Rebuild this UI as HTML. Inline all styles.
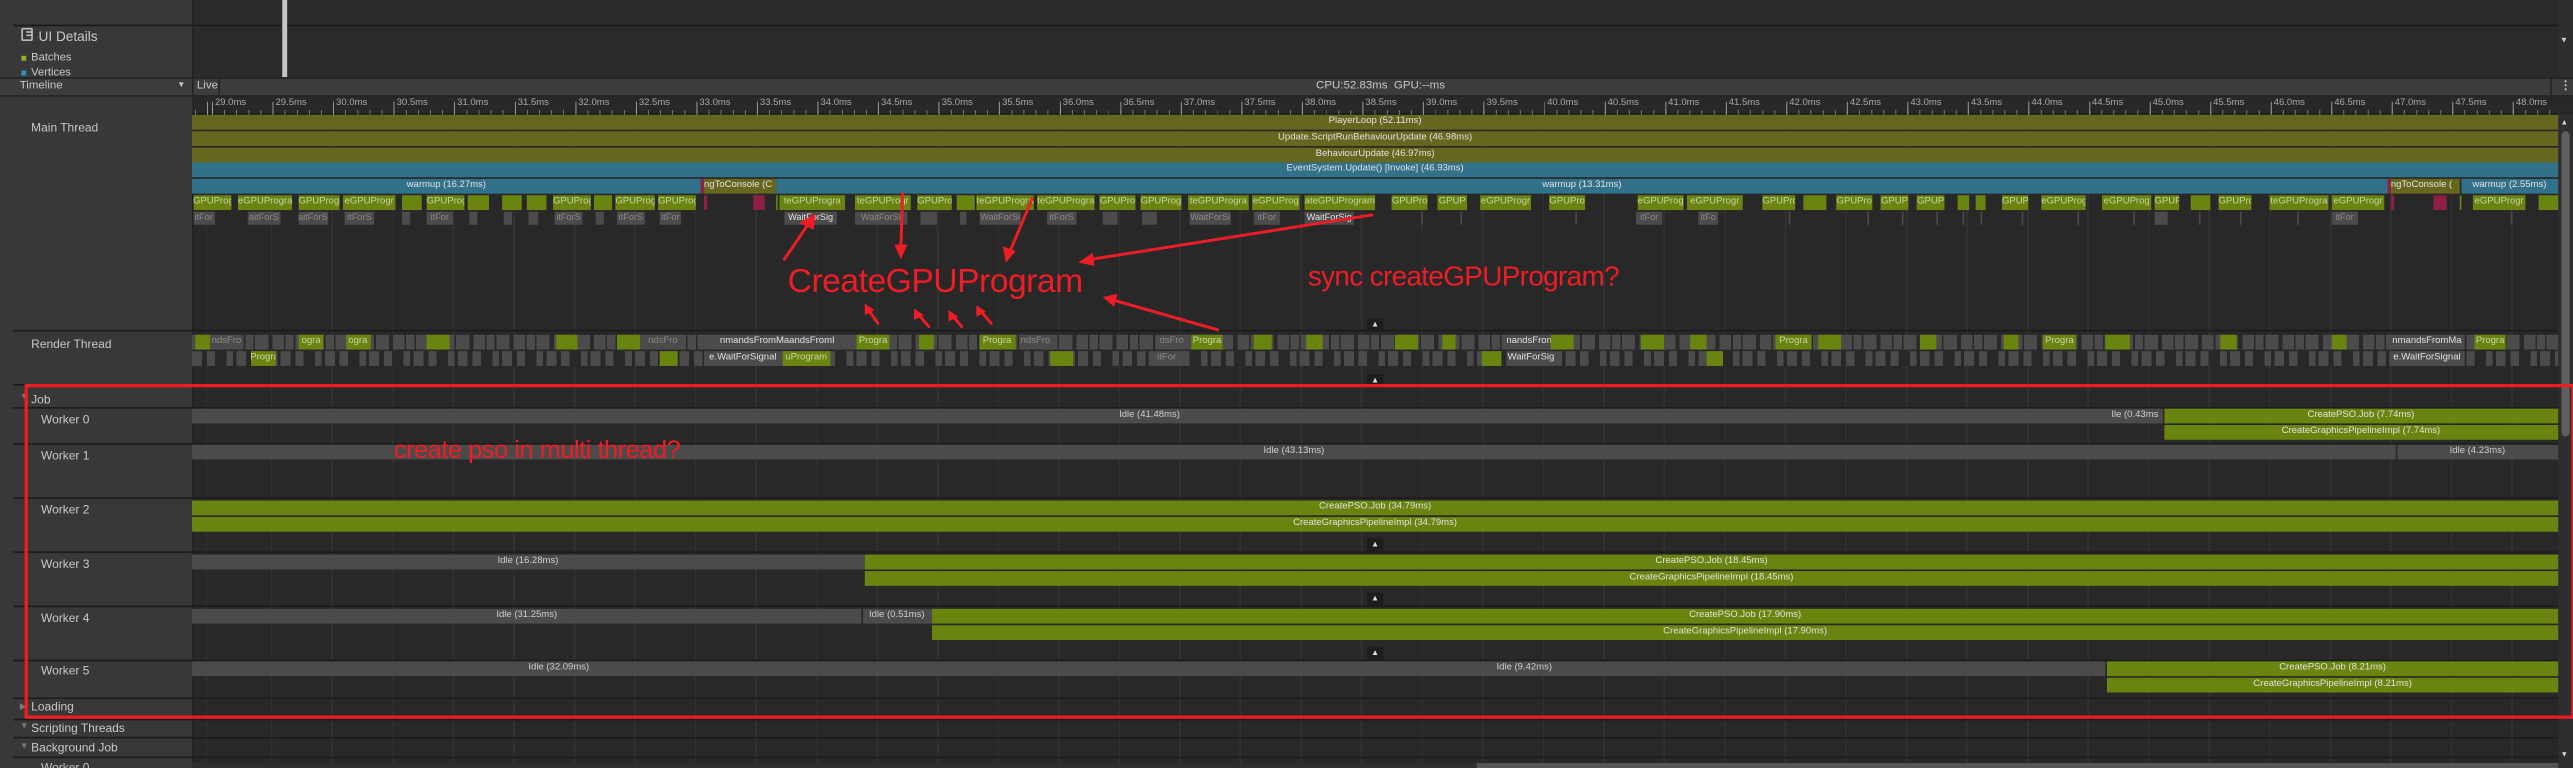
<!DOCTYPE html>
<html><head><meta charset="utf-8"><style>
body{margin:0;width:2573px;height:768px;overflow:hidden;background:#282828}
#w{position:absolute;left:0;top:0;width:1568px;height:468px;transform:scale(1.64094,1.64103);transform-origin:0 0;font-family:"Liberation Sans",sans-serif;overflow:hidden;background:#282828}
#w div{position:absolute;box-sizing:border-box}
.b{height:9px;font-size:5.8px;line-height:9px;text-align:center;color:#e2e2e2;overflow:hidden;white-space:nowrap}
.o{background:#66671f}.bl{background:#32718a}.g{background:#6a8410;color:#c9d3a8}.gy{background:#4b4b4b;color:#cfcfcf}.pk{background:#8f1f45}
.t{height:8px;top:129px;background:#4b4b4b;font-size:5.6px;line-height:8px;color:#8a8a8a;overflow:hidden;white-space:nowrap;text-align:center}
.th{width:1px;height:8px;top:129px;background:#4b4b4b}
.m{top:119px}
.r1{top:204px}.r2{top:214px}
.lab{color:#c8c8c8;font-size:7.3px;white-space:nowrap}
.rl{top:60px;font-size:5.8px;color:#a8a8a8;white-space:nowrap}
.sep{height:1px;background:#1c1c1c}
.tri{width:10px;height:8px;background:#1d1d1d;color:#ddd;font-size:5px;line-height:8px;text-align:center;border-radius:1px}
</style></head><body><div id="w">

<div style="left:0;top:0;width:117px;height:47px;background:#383838"></div>
<div style="left:117px;top:0;width:1451px;height:47px;background:#2a2a2a"></div>
<div style="left:8px;top:14.5px;width:1551px;height:1px;background:#1a1a1a"></div>
<div style="left:116.5px;top:0;width:1px;height:47px;background:#222"></div>
<div style="left:171.5px;top:0;width:3px;height:47px;background:#c4c4c4"></div>
<div style="left:1559px;top:0;width:9px;height:47px;background:#2e2e2e"></div>
<div style="left:1560px;top:22px;color:#ccc;font-size:5px">▼</div>
<div style="left:13px;top:17px;width:7px;height:8px;border:1px solid #bbb;border-radius:1px"></div>
<div style="left:16px;top:18.5px;width:4px;height:1px;background:#bbb"></div>
<div style="left:16px;top:20.5px;width:4px;height:1px;background:#bbb"></div>
<div class="lab" style="left:23.5px;top:17px;font-size:8.3px">UI Details</div>
<div style="left:13px;top:34px;width:3px;height:3px;background:#8fb020"></div>
<div class="lab" style="left:19px;top:31.5px;font-size:6.8px">Batches</div>
<div style="left:13px;top:43px;width:3px;height:3px;background:#2e8fc0"></div>
<div class="lab" style="left:19px;top:41px;font-size:6.8px">Vertices</div>

<div style="left:0;top:47px;width:1568px;height:12px;background:#3c3c3c;border-top:1px solid #232323;border-bottom:1px solid #232323"></div>
<div class="lab" style="left:12px;top:48.5px;font-size:7px">Timeline</div>
<div style="left:108px;top:49px;color:#ccc;font-size:5px">▼</div>
<div style="left:116.5px;top:47px;width:1px;height:12px;background:#232323"></div>
<div class="lab" style="left:120px;top:48.5px;font-size:7px">Live</div>
<div style="left:132.5px;top:47px;width:1px;height:12px;background:#232323"></div>
<div class="lab" style="left:802px;top:48.5px;font-size:7px">CPU:52.83ms&nbsp;&nbsp;GPU:--ms</div>
<div style="left:1554px;top:47px;width:1px;height:12px;background:#232323"></div>
<div class="lab" style="left:1560px;top:48px;font-size:7px;font-weight:bold">⋮</div>

<div style="left:0;top:59px;width:117px;height:409px;background:#383838"></div>
<div style="left:116.5px;top:59px;width:1px;height:409px;background:#222"></div>

<div style="left:117px;top:59px;width:1442px;height:409px;background:repeating-linear-gradient(90deg,transparent 0 35.9px,#323232 35.9px 36.9px);background-position:12.2px 0"></div>
<div style="left:117px;top:59px;width:1442px;height:10.5px;background:#282828;border-bottom:1px solid #1c1c1c"></div>
<div style="left:117px;top:66.5px;width:1442px;height:3px;background:repeating-linear-gradient(90deg,#777 0 .6px,transparent .6px 7.38px);background-position:12.2px 0"></div>
<div style="left:117px;top:61.5px;width:1442px;height:8px;background:repeating-linear-gradient(90deg,#999 0 .6px,transparent .6px 36.9px);background-position:12.2px 0"></div>
<div class="rl" style="left:131px">29.0ms</div><div class="rl" style="left:167.9px">29.5ms</div><div class="rl" style="left:204.8px">30.0ms</div><div class="rl" style="left:241.7px">30.5ms</div><div class="rl" style="left:278.6px">31.0ms</div><div class="rl" style="left:315.5px">31.5ms</div><div class="rl" style="left:352.4px">32.0ms</div><div class="rl" style="left:389.3px">32.5ms</div><div class="rl" style="left:426.2px">33.0ms</div><div class="rl" style="left:463.1px">33.5ms</div><div class="rl" style="left:500px">34.0ms</div><div class="rl" style="left:536.9px">34.5ms</div><div class="rl" style="left:573.8px">35.0ms</div><div class="rl" style="left:610.7px">35.5ms</div><div class="rl" style="left:647.6px">36.0ms</div><div class="rl" style="left:684.5px">36.5ms</div><div class="rl" style="left:721.4px">37.0ms</div><div class="rl" style="left:758.3px">37.5ms</div><div class="rl" style="left:795.2px">38.0ms</div><div class="rl" style="left:832.1px">38.5ms</div><div class="rl" style="left:869px">39.0ms</div><div class="rl" style="left:905.9px">39.5ms</div><div class="rl" style="left:942.8px">40.0ms</div><div class="rl" style="left:979.7px">40.5ms</div><div class="rl" style="left:1016.6px">41.0ms</div><div class="rl" style="left:1053.5px">41.5ms</div><div class="rl" style="left:1090.4px">42.0ms</div><div class="rl" style="left:1127.3px">42.5ms</div><div class="rl" style="left:1164.2px">43.0ms</div><div class="rl" style="left:1201.1px">43.5ms</div><div class="rl" style="left:1238px">44.0ms</div><div class="rl" style="left:1274.9px">44.5ms</div><div class="rl" style="left:1311.8px">45.0ms</div><div class="rl" style="left:1348.7px">45.5ms</div><div class="rl" style="left:1385.6px">46.0ms</div><div class="rl" style="left:1422.5px">46.5ms</div><div class="rl" style="left:1459.4px">47.0ms</div><div class="rl" style="left:1496.3px">47.5ms</div><div class="rl" style="left:1533.2px">48.0ms</div>

<div style="left:1559px;top:70px;width:9px;height:398px;background:#2e2e2e"></div>
<div style="left:1561px;top:80px;width:5px;height:186px;background:#5e5e5e;border-radius:3px"></div>
<div style="left:1560.5px;top:72px;color:#ddd;font-size:4.5px">▲</div>
<div style="left:1560.5px;top:457px;color:#ddd;font-size:4.5px">▼</div>

<div class="lab" style="left:19px;top:73px">Main Thread</div>
<div class="b o" style="left:117px;top:70px;width:1442px">PlayerLoop (52.11ms)</div>
<div class="b o" style="left:117px;top:79.8px;width:1442px">Update.ScriptRunBehaviourUpdate (46.98ms)</div>
<div class="b o" style="left:117px;top:89.6px;width:1442px">BehaviourUpdate (46.97ms)</div>
<div class="b bl" style="left:117px;top:99.4px;width:1442px">EventSystem.Update() [Invoke] (46.93ms)</div>
<div class="b bl" style="left:117px;top:109.2px;width:310px">warmup (16.27ms)</div>
<div class="b o" style="left:427px;top:109.2px;width:46px;text-align:left;padding-left:2px">ngToConsole (C</div>
<div class="pk" style="left:427px;top:109.2px;width:1.5px;height:9px"></div>
<div class="b bl" style="left:473px;top:109.2px;width:982px">warmup (13.31ms)</div>
<div class="b o" style="left:1455px;top:109.2px;width:44px;text-align:left;padding-left:2px">ngToConsole (</div>
<div class="pk" style="left:1455px;top:109.2px;width:1.5px;height:9px"></div>
<div class="b bl" style="left:1499.5px;top:109.2px;width:59.5px">warmup (2.55ms)</div>

<div class="b g m" style="left:117.6px;width:23px">GPUProg</div>
<div class="b g m" style="left:145px;width:33px">eGPUProgra</div>
<div class="b g m" style="left:181.6px;width:25.5px">GPUProg</div>
<div class="b g m" style="left:209px;width:32px">eGPUProgr</div>
<div class="b g m" style="left:245px;width:12px"></div>
<div class="b g m" style="left:260px;width:23px">GPUProg</div>
<div class="b g m" style="left:285px;width:13px"></div>
<div class="b g m" style="left:306px;width:12px"></div>
<div class="b g m" style="left:321px;width:12px"></div>
<div class="b g m" style="left:337px;width:23px">GPUProg</div>
<div class="b g m" style="left:362px;width:11px"></div>
<div class="b g m" style="left:375px;width:24px">GPUProg</div>
<div class="b g m" style="left:401px;width:23px">GPUProg</div>
<div class="pk m" style="left:429px;width:1.5px;height:9px"></div>
<div class="pk m" style="left:459px;width:7px;height:9px"></div>
<div class="g m" style="left:473px;width:.8px;height:9px"></div>
<div class="b g m" style="left:475px;width:40px">teGPUProgra</div>
<div class="b g m" style="left:521px;width:34px">teGPUProgr</div>
<div class="b g m" style="left:559px;width:21px">GPUPro</div>
<div class="b g m" style="left:583px;width:11px"></div>
<div class="b g m" style="left:595px;width:35px">teGPUProgra</div>
<div class="b g m" style="left:632px;width:35px">teGPUProgra</div>
<div class="b g m" style="left:670px;width:22px">GPUPro</div>
<div class="b g m" style="left:695px;width:25px">GPUProg</div>
<div class="b g m" style="left:724px;width:37px">teGPUProgra</div>
<div class="b g m" style="left:763px;width:29px">eGPUProg</div>
<div class="b g m" style="left:795px;width:43px">ateGPUProgram</div>
<div class="b g m" style="left:848px;width:22px">GPUPro</div>
<div class="b g m" style="left:876px;width:18px">GPUP</div>
<div class="b g m" style="left:902px;width:31px">eGPUProgr</div>
<div class="b g m" style="left:944px;width:22px">GPUPro</div>
<div class="b g m" style="left:998px;width:28px">eGPUProg</div>
<div class="b g m" style="left:1028px;width:34px">eGPUProgr</div>
<div class="b g m" style="left:1074px;width:20px">GPUPro</div>
<div class="b g m" style="left:1099px;width:14px"></div>
<div class="b g m" style="left:1119px;width:22px">GPUPro</div>
<div class="b g m" style="left:1146px;width:17px">GPUP</div>
<div class="b g m" style="left:1168px;width:17px">GPUP</div>
<div class="b g m" style="left:1193px;width:7px"></div>
<div class="b g m" style="left:1204px;width:6px"></div>
<div class="b g m" style="left:1220px;width:16px">GPUP</div>
<div class="b g m" style="left:1244px;width:27px">eGPUProg</div>
<div class="b g m" style="left:1281px;width:30px">eGPUProg</div>
<div class="b g m" style="left:1313px;width:15px">GPUP</div>
<div class="b g m" style="left:1335px;width:12px"></div>
<div class="b g m" style="left:1352px;width:20px">GPUPro</div>
<div class="b g m" style="left:1383px;width:36px">teGPUProgra</div>
<div class="b g m" style="left:1421px;width:32px">eGPUProgr</div>
<div class="pk m" style="left:1457px;width:2px;height:9px"></div>
<div class="pk m" style="left:1483px;width:8px;height:9px"></div>
<div class="g m" style="left:1499px;width:.8px;height:9px"></div>
<div class="b g m" style="left:1507px;width:32px">eGPUProgr</div>
<div class="b g m" style="left:1547px;width:12px"></div>

<div class="t" style="left:117.6px;width:13px">itFor</div>
<div class="t" style="left:150.5px;width:20.5px">aitForS</div>
<div class="t" style="left:181.6px;width:18px">aitForS</div>
<div class="t" style="left:210px;width:18px">itForS</div>
<div class="t" style="left:245px;width:4.5px"></div>
<div class="t" style="left:260px;width:16px">itFor</div>
<div class="t" style="left:286px;width:5px"></div>
<div class="t" style="left:306.6px;width:5px"></div>
<div class="t" style="left:322px;width:6px"></div>
<div class="t" style="left:338px;width:17px">itForS</div>
<div class="t" style="left:363px;width:5px"></div>
<div class="t" style="left:376px;width:17px">itForS</div>
<div class="t" style="left:402px;width:13px">itFor</div>
<div class="t" style="left:478px;width:32px;color:#e2e2e2">WaitForSig</div>
<div class="t" style="left:521px;width:31.6px">WaitForSi</div>
<div class="t" style="left:560.7px;width:10px"></div>
<div class="t" style="left:584.5px;width:4px"></div>
<div class="t" style="left:597px;width:25px">WaitForSi</div>
<div class="t" style="left:638px;width:18px">itForS</div>
<div class="t" style="left:671.6px;width:9px"></div>
<div class="t" style="left:696px;width:9px"></div>
<div class="t" style="left:725px;width:25px">WaitForSi</div>
<div class="t" style="left:764px;width:16px">itFor</div>
<div class="t" style="left:795px;width:30px;color:#e2e2e2">WaitForSig</div>
<div class="th" style="left:866px"></div><div class="th" style="left:890px"></div><div class="th" style="left:960px"></div>
<div class="t" style="left:997px;width:16px">itFor</div>
<div class="t" style="left:1035px;width:12px">itFo</div>
<div class="th" style="left:1090px"></div><div class="th" style="left:1138px"></div><div class="th" style="left:1158.5px"></div><div class="th" style="left:1180px"></div><div class="th" style="left:1196px"></div><div class="th" style="left:1207px"></div><div class="th" style="left:1232px"></div><div class="th" style="left:1266px"></div><div class="th" style="left:1300px"></div>
<div class="t" style="left:1313px;width:7.5px"></div>
<div class="th" style="left:1340px"></div><div class="th" style="left:1365px"></div><div class="th" style="left:1400px"></div>
<div class="t" style="left:1421px;width:15.5px">itFor</div>
<div class="th" style="left:1530px"></div>

<div class="sep" style="left:8px;top:201px;width:1551px"></div>
<div class="tri" style="left:833px;top:194px">▲</div>

<div class="lab" style="left:19px;top:205px">Render Thread</div>
<div style="left:117px;top:204px;width:1442px;height:9px;background:repeating-linear-gradient(90deg,#4b4b4b 0 7px,#292929 7px 8px,#4b4b4b 8px 13px,#292929 13px 14px,#4b4b4b 14px 22px,#292929 22px 24.5px)"></div>
<div style="left:117px;top:214px;width:1442px;height:9px;background:repeating-linear-gradient(90deg,#4b4b4b 0 6px,#282828 6px 9px,#4b4b4b 9px 14px,#282828 14px 21px,#4b4b4b 21px 25px,#282828 25px 27px)"></div>
<div class="b g r1" style="left:118.6px;width:9.6px"></div>
<div class="b gy r1" style="left:129px;width:18px;color:#8a8a8a">ndsFro</div>
<div class="b g r1" style="left:181.8px;width:15.7px">ogra</div>
<div class="b g r1" style="left:210.5px;width:15.2px">ogra</div>
<div class="b g r1" style="left:260px;width:13.6px"></div>
<div class="b g r1" style="left:338.5px;width:13px"></div>
<div class="b g r1" style="left:376px;width:14px"></div>
<div class="b gy r1" style="left:392px;width:24px;color:#8a8a8a">ndsFro</div>
<div class="b gy r1" style="left:428.7px;width:90px;color:#e2e2e2">nmandsFromMaandsFromI</div>
<div class="b g r1" style="left:521.7px;width:20.8px">Progra</div>
<div class="b g r1" style="left:559.5px;width:9px"></div>
<div class="b g r1" style="left:596.6px;width:22px">Progra</div>
<div class="b gy r1" style="left:621px;width:20px;color:#8a8a8a">ndsFro</div>
<div class="b gy r1" style="left:704px;width:20px;color:#8a8a8a">dsFro</div>
<div class="b g r1" style="left:725.7px;width:19.8px">Progra</div>
<div class="b g r1" style="left:764px;width:11.3px"></div>
<div class="b g r1" style="left:796px;width:10.4px"></div>
<div class="b g r1" style="left:849.7px;width:14.7px"></div>
<div class="b g r1" style="left:878.5px;width:8.5px"></div>
<div class="b gy r1" style="left:918px;width:30px;color:#e2e2e2">nandsFromM</div>
<div class="b g r1" style="left:945px;width:14px"></div>
<div class="b g r1" style="left:1000px;width:14px"></div>
<div class="b g r1" style="left:1030px;width:10px"></div>
<div class="b g r1" style="left:1082px;width:22px">Progra</div>
<div class="b g r1" style="left:1108px;width:14px"></div>
<div class="b g r1" style="left:1169.6px;width:10px"></div>
<div class="b g r1" style="left:1221px;width:9px"></div>
<div class="b g r1" style="left:1245px;width:20px">Progra</div>
<div class="b g r1" style="left:1282.5px;width:15px"></div>
<div class="b g r1" style="left:1353.4px;width:10px"></div>
<div class="b g r1" style="left:1421.4px;width:9px"></div>
<div class="b gy r1" style="left:1456px;width:46px;color:#e2e2e2">nmandsFromMa</div>
<div class="b g r1" style="left:1507.7px;width:19.6px">Progra</div>
<div class="b g r2" style="left:152.5px;width:15.5px">Progra</div>
<div class="b g r2" style="left:402px;width:11px"></div>
<div class="b gy r2" style="left:428.7px;width:48px;color:#e2e2e2">e.WaitForSignal</div>
<div class="b g r2" style="left:476.6px;width:29.4px">uProgram</div>
<div class="b g r2" style="left:640px;width:14px"></div>
<div class="b gy r2" style="left:700px;width:22px;color:#8a8a8a">itFor</div>
<div class="b g r2" style="left:903px;width:12px"></div>
<div class="b gy r2" style="left:918px;width:30px;color:#e2e2e2">WaitForSig</div>
<div class="b g r2" style="left:1040px;width:10px"></div>
<div class="b gy r2" style="left:1456px;width:46px;color:#e2e2e2">e.WaitForSignal</div>

<div class="sep" style="left:8px;top:234px;width:1551px"></div>
<div class="tri" style="left:833px;top:228px">▲</div>

<div style="left:12px;top:239px;color:#777;font-size:5.5px">▼</div>
<div class="lab" style="left:19px;top:238.5px">Job</div>
<div class="sep" style="left:8px;top:247.5px;width:1551px"></div>

<div class="lab" style="left:25px;top:251px">Worker 0</div>
<div class="b gy" style="left:117px;top:249px;width:1167px">Idle (41.48ms)</div>
<div class="b gy" style="left:1284px;top:249px;width:34px">Ile (0.43ms</div>
<div class="b g" style="left:1318.5px;top:249px;width:240.5px;color:#e2e2e2">CreatePSO.Job (7.74ms)</div>
<div class="b g" style="left:1318.5px;top:259px;width:240.5px;color:#e2e2e2">CreateGraphicsPipelineImpl (7.74ms)</div>
<div class="sep" style="left:8px;top:269.5px;width:1551px"></div>

<div class="lab" style="left:25px;top:273px">Worker 1</div>
<div class="b gy" style="left:117px;top:271px;width:1343px">Idle (43.13ms)</div>
<div class="b gy" style="left:1460.5px;top:271px;width:98.5px">Idle (4.23ms)</div>
<div class="sep" style="left:8px;top:302.5px;width:1551px"></div>

<div class="lab" style="left:25px;top:306px">Worker 2</div>
<div class="b g" style="left:117px;top:305px;width:1442px;color:#e2e2e2">CreatePSO.Job (34.79ms)</div>
<div class="b g" style="left:117px;top:315px;width:1442px;color:#e2e2e2">CreateGraphicsPipelineImpl (34.79ms)</div>
<div class="tri" style="left:833px;top:328px">▲</div>
<div class="sep" style="left:8px;top:335.5px;width:1551px"></div>

<div class="lab" style="left:25px;top:339px">Worker 3</div>
<div class="b gy" style="left:117px;top:337.5px;width:409.5px">Idle (16.28ms)</div>
<div class="b g" style="left:527px;top:337.5px;width:1032px;color:#e2e2e2">CreatePSO.Job (18.45ms)</div>
<div class="b g" style="left:527px;top:347.5px;width:1032px;color:#e2e2e2">CreateGraphicsPipelineImpl (18.45ms)</div>
<div class="tri" style="left:833px;top:361px">▲</div>
<div class="sep" style="left:8px;top:368.5px;width:1551px"></div>

<div class="lab" style="left:25px;top:372px">Worker 4</div>
<div class="b gy" style="left:117px;top:370.5px;width:408px">Idle (31.25ms)</div>
<div class="b gy" style="left:525.5px;top:370.5px;width:42px">Idle (0.51ms)</div>
<div class="b g" style="left:568px;top:370.5px;width:991px;color:#e2e2e2">CreatePSO.Job (17.90ms)</div>
<div class="b g" style="left:568px;top:380.5px;width:991px;color:#e2e2e2">CreateGraphicsPipelineImpl (17.90ms)</div>
<div class="tri" style="left:833px;top:394px">▲</div>
<div class="sep" style="left:8px;top:401.5px;width:1551px"></div>

<div class="lab" style="left:25px;top:404px">Worker 5</div>
<div class="b gy" style="left:117px;top:403px;width:1166px;text-align:left"><span style="position:absolute;left:205px">Idle (32.09ms)</span><span style="position:absolute;left:795px">Idle (9.42ms)</span></div>
<div class="b g" style="left:1284px;top:403px;width:275px;color:#e2e2e2">CreatePSO.Job (8.21ms)</div>
<div class="b g" style="left:1284px;top:413px;width:275px;color:#e2e2e2">CreateGraphicsPipelineImpl (8.21ms)</div>
<div class="sep" style="left:8px;top:424.5px;width:1551px"></div>

<div style="left:12px;top:427.5px;color:#777;font-size:5.5px">▶</div>
<div class="lab" style="left:19px;top:426px">Loading</div>
<div class="sep" style="left:8px;top:437.5px;width:1551px"></div>
<div style="left:12px;top:439.5px;color:#777;font-size:5.5px">▼</div>
<div class="lab" style="left:19px;top:438.5px">Scripting Threads</div>
<div class="sep" style="left:8px;top:449px;width:1551px"></div>
<div style="left:12px;top:451.5px;color:#777;font-size:5.5px">▼</div>
<div class="lab" style="left:19px;top:450.5px">Background Job</div>
<div class="sep" style="left:8px;top:461px;width:1551px"></div>
<div class="lab" style="left:25px;top:463px">Worker 0</div>
<div style="left:117px;top:465px;width:1442px;height:3px;background:#2e2e2e"></div>
<div style="left:900px;top:465px;width:659px;height:3px;background:#555"></div>

<div style="left:14.5px;top:234px;width:1554px;height:204px;border:2px solid #ee1c25"></div>
<div style="left:480px;top:160px;color:#ee1c25;font-size:20.5px;white-space:nowrap;letter-spacing:-.3px">CreateGPUProgram</div>
<div style="left:797px;top:159px;color:#ee1c25;font-size:17px;white-space:nowrap;letter-spacing:-.4px">sync createGPUProgram?</div>
<div style="left:240px;top:266px;color:#ee1c25;font-size:15.5px;white-space:nowrap;letter-spacing:-.3px">create pso in multi thread?</div>
<svg style="position:absolute;left:0;top:0" width="1568" height="468" viewBox="0 0 1568 468">
<g stroke="#ee1c25" stroke-width="1.8" fill="#ee1c25" stroke-linecap="round">
<line x1="478" y1="158" x2="493" y2="136"/><polygon points="497,130 487,136 496,140" stroke="none"/>
<line x1="550" y1="118" x2="549" y2="151"/><polygon points="549,158 545,149 553,149" stroke="none"/>
<line x1="629" y1="121" x2="616" y2="152"/><polygon points="613,160 611,150 619,153" stroke="none"/>
<line x1="836" y1="131" x2="665" y2="158"/><polygon points="657,160 666,154 667,162" stroke="none"/>
<line x1="742" y1="201" x2="679" y2="183"/><polygon points="672,181 681,179 679,187" stroke="none"/>
<line x1="535" y1="197" x2="530" y2="190"/><polygon points="527,185 527,192 533,189" stroke="none"/>
<line x1="566" y1="199" x2="560" y2="192"/><polygon points="557,188 557,195 563,192" stroke="none"/>
<line x1="586" y1="199" x2="581" y2="193"/><polygon points="578,189 578,196 584,193" stroke="none"/>
<line x1="604" y1="197" x2="598" y2="190"/><polygon points="595,186 595,193 601,190" stroke="none"/>
</g></svg>
</div></body></html>
